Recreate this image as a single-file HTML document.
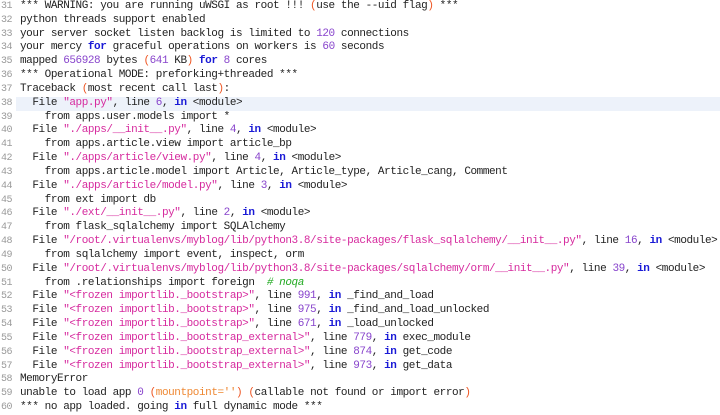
<!DOCTYPE html><html><head><style>
html,body{margin:0;padding:0;background:#fff;width:720px;height:413px;overflow:hidden}
.w{position:absolute;top:0;left:0;width:720px}
.l{position:relative;height:13.83px;line-height:13.83px;font-family:"Liberation Mono",monospace;font-size:11px;letter-spacing:-0.43px;white-space:pre;color:#222}
.n{position:absolute;left:-4px;width:16px;text-align:right;color:#9a9a9a;font-size:10px;letter-spacing:-0.5px}
.t{position:absolute;left:20px}
.s{color:#d62a9e}.d{color:#8844cc}.k{color:#1a1ad6;font-weight:bold}.p{color:#ee5522}.o{color:#ee8833}.c{color:#22aa22;font-style:italic}
</style></head><body><div class="w" style="top:0px">
<div class="l"><span class="n">31</span><span class="t">*** WARNING: you are running uWSGI as root !!! <span class="p">(</span>use the --uid flag<span class="p">)</span> ***</span></div>
<div class="l"><span class="n">32</span><span class="t">python threads support enabled</span></div>
<div class="l"><span class="n">33</span><span class="t">your server socket listen backlog is limited to <span class="d">120</span> connections</span></div>
<div class="l"><span class="n">34</span><span class="t">your mercy <span class="k">for</span> graceful operations on workers is <span class="d">60</span> seconds</span></div>
<div class="l"><span class="n">35</span><span class="t">mapped <span class="d">656928</span> bytes <span class="p">(</span><span class="d">641</span> KB<span class="p">)</span> <span class="k">for</span> <span class="d">8</span> cores</span></div>
<div class="l"><span class="n">36</span><span class="t">*** Operational MODE: preforking+threaded ***</span></div>
<div class="l"><span class="n">37</span><span class="t">Traceback <span class="p">(</span>most recent call last<span class="p">)</span>:</span></div>
<div class="l" style="background:linear-gradient(to right,#fff 16px,#edf2fa 16px)"><span class="n">38</span><span class="t">  File <span class="s">"app.py"</span>, line <span class="d">6</span>, <span class="k">in</span> &lt;module&gt;</span></div>
<div class="l"><span class="n">39</span><span class="t">    from apps.user.models import *</span></div>
<div class="l"><span class="n">40</span><span class="t">  File <span class="s">"./apps/__init__.py"</span>, line <span class="d">4</span>, <span class="k">in</span> &lt;module&gt;</span></div>
<div class="l"><span class="n">41</span><span class="t">    from apps.article.view import article_bp</span></div>
<div class="l"><span class="n">42</span><span class="t">  File <span class="s">"./apps/article/view.py"</span>, line <span class="d">4</span>, <span class="k">in</span> &lt;module&gt;</span></div>
<div class="l"><span class="n">43</span><span class="t">    from apps.article.model import Article, Article_type, Article_cang, Comment</span></div>
<div class="l"><span class="n">44</span><span class="t">  File <span class="s">"./apps/article/model.py"</span>, line <span class="d">3</span>, <span class="k">in</span> &lt;module&gt;</span></div>
<div class="l"><span class="n">45</span><span class="t">    from ext import db</span></div>
<div class="l"><span class="n">46</span><span class="t">  File <span class="s">"./ext/__init__.py"</span>, line <span class="d">2</span>, <span class="k">in</span> &lt;module&gt;</span></div>
<div class="l"><span class="n">47</span><span class="t">    from flask_sqlalchemy import SQLAlchemy</span></div>
<div class="l"><span class="n">48</span><span class="t">  File <span class="s">"/root/.virtualenvs/myblog/lib/python3.8/site-packages/flask_sqlalchemy/__init__.py"</span>, line <span class="d">16</span>, <span class="k">in</span> &lt;module&gt;</span></div>
<div class="l"><span class="n">49</span><span class="t">    from sqlalchemy import event, inspect, orm</span></div>
<div class="l"><span class="n">50</span><span class="t">  File <span class="s">"/root/.virtualenvs/myblog/lib/python3.8/site-packages/sqlalchemy/orm/__init__.py"</span>, line <span class="d">39</span>, <span class="k">in</span> &lt;module&gt;</span></div>
<div class="l"><span class="n">51</span><span class="t">    from .relationships import foreign  <span class="c"># noqa</span></span></div>
<div class="l"><span class="n">52</span><span class="t">  File <span class="s">"&lt;frozen importlib._bootstrap&gt;"</span>, line <span class="d">991</span>, <span class="k">in</span> _find_and_load</span></div>
<div class="l"><span class="n">53</span><span class="t">  File <span class="s">"&lt;frozen importlib._bootstrap&gt;"</span>, line <span class="d">975</span>, <span class="k">in</span> _find_and_load_unlocked</span></div>
<div class="l"><span class="n">54</span><span class="t">  File <span class="s">"&lt;frozen importlib._bootstrap&gt;"</span>, line <span class="d">671</span>, <span class="k">in</span> _load_unlocked</span></div>
<div class="l"><span class="n">55</span><span class="t">  File <span class="s">"&lt;frozen importlib._bootstrap_external&gt;"</span>, line <span class="d">779</span>, <span class="k">in</span> exec_module</span></div>
<div class="l"><span class="n">56</span><span class="t">  File <span class="s">"&lt;frozen importlib._bootstrap_external&gt;"</span>, line <span class="d">874</span>, <span class="k">in</span> get_code</span></div>
<div class="l"><span class="n">57</span><span class="t">  File <span class="s">"&lt;frozen importlib._bootstrap_external&gt;"</span>, line <span class="d">973</span>, <span class="k">in</span> get_data</span></div>
<div class="l"><span class="n">58</span><span class="t">MemoryError</span></div>
<div class="l"><span class="n">59</span><span class="t">unable to load app <span class="d">0</span> <span class="p">(</span><span class="o">mountpoint=''</span><span class="p">)</span> <span class="p">(</span>callable not found or import error<span class="p">)</span></span></div>
<div class="l"><span class="n">60</span><span class="t">*** no app loaded. going <span class="k">in</span> full dynamic mode ***</span></div>
</div></body></html>
